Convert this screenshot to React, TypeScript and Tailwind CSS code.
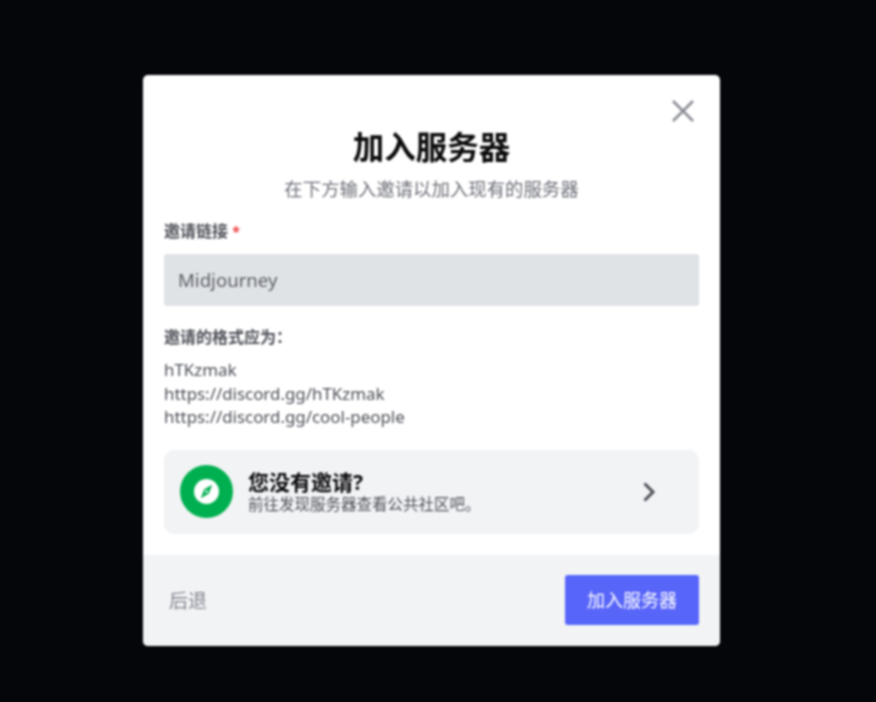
import React from 'react';

const cjk = "font-['Noto_Sans','Noto_Sans_CJK_SC',sans-serif]";

const CloseIcon = () => (
  <svg width="24" height="24" viewBox="0 0 24 24" fill="none" stroke="#8b8e94" strokeWidth="2.6">
    <path d="M2 2 L22 22 M22 2 L2 22" />
  </svg>
);

const CompassIcon = () => (
  <svg width="25" height="25" viewBox="0 0 24 24">
    <circle cx="12" cy="12" r="12" fill="#ffffff" />
    <path d="M17.5 5.5 L14.2 14.2 L6.5 18.5 L9.8 9.8 Z" fill="#00b050" />
    <circle cx="12" cy="12" r="1.2" fill="#ffffff" />
  </svg>
);

const App = () => {
  return (
    <div className={`w-[876px] h-[702px] overflow-hidden bg-[#050609] pt-[75px] pl-[143px] ${cjk}`}>
      <div className="w-[577px] h-[571px] flex flex-col bg-white rounded-[5px] overflow-hidden blur-[0.8px]">
        <div className="flex-1 flex flex-col px-[21px]">
          <div className="h-[24px] mt-[24px] mr-[4px] flex justify-end">
            <CloseIcon />
          </div>
          <h1 className="mt-[3px] text-center text-[31.5px] leading-[42px] font-bold text-[#0b0b0c]">加入服务器</h1>
          <p className="mt-[9px] text-center text-[18.4px] leading-[24px] text-[#6d6f78]">在下方输入邀请以加入现有的服务器</p>
          <div className="mt-[20px] text-[16px] leading-[20px] font-bold text-[#4e5058]">
            邀请链接 <span className="text-[#f23f42] text-[14px]">*</span>
          </div>
          <div className="mt-[12px] h-[52px] flex items-center px-[14px] bg-[#e0e3e6] rounded-[3px] text-[18.6px] text-[#5c5e66]">
            Midjourney
          </div>
          <div className="mt-[21px] text-[16px] leading-[20px] font-bold text-[#4e5058]">邀请的格式应为：</div>
          <div className="mt-[11px] text-[16.9px] leading-[23.5px] text-[#4e5058]">
            <div>hTKzmak</div>
            <div>https://discord.gg/hTKzmak</div>
            <div>https://discord.gg/cool-people</div>
          </div>
          <div className="mt-[21px] h-[84px] flex items-center pl-[16px] pr-[43px] bg-[#f2f3f5] rounded-[10px]">
            <div className="w-[53px] h-[53px] flex items-center justify-center rounded-full bg-[#00b050]">
              <CompassIcon />
            </div>
            <div className="ml-[15px] flex-1">
              <div className="text-[21px] leading-[24px] font-bold text-[#0b0b0c]">您没有邀请?</div>
              <div className="text-[15.5px] leading-[20px] text-[#4e5058]">前往发现服务器查看公共社区吧。</div>
            </div>
            <svg width="14" height="22" viewBox="0 0 14 22" fill="none" stroke="#4e5058" strokeWidth="3">
              <path d="M2.5 2.5 L11 11 L2.5 19.5" />
            </svg>
          </div>
        </div>
        <div className="h-[91px] flex items-center justify-between pl-[26px] pr-[21px] pb-[2px] bg-[#f2f3f5]">
          <span className="mt-[4px] text-[19px] text-[#80848e]">后退</span>
          <button className="w-[134px] h-[50px] pt-[2px] bg-[#5865f9] rounded-[3px] text-[18px] text-white">加入服务器</button>
        </div>
      </div>
    </div>
  );
};

export default App;
